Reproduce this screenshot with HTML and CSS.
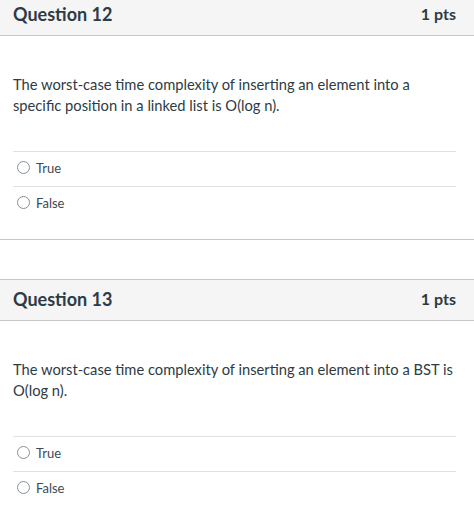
FILE: index.html
```html
<!DOCTYPE html>
<html>
<head>
<meta charset="utf-8">
<link rel="stylesheet" href="styles.css">
</head>
<body>
<div class="quiz">
  <section class="question">
    <header class="q-head">
      <h2 class="q-name">Question 12</h2>
      <span class="q-pts">1 pts</span>
    </header>
    <div class="q-body">
      <p class="q-text">The worst-case time complexity of inserting an element into a specific position in a linked list is O(log n).</p>
      <ul class="answers">
        <li class="answer"><span class="radio"></span><span>True</span></li>
        <li class="answer"><span class="radio"></span><span>False</span></li>
      </ul>
    </div>
  </section>
  <section class="question">
    <header class="q-head">
      <h2 class="q-name">Question 13</h2>
      <span class="q-pts">1 pts</span>
    </header>
    <div class="q-body">
      <p class="q-text">The worst-case time complexity of inserting an element into a BST is O(log n).</p>
      <ul class="answers">
        <li class="answer"><span class="radio"></span><span>True</span></li>
        <li class="answer"><span class="radio"></span><span>False</span></li>
      </ul>
    </div>
  </section>
</div>
</body>
</html>
```
FILE: styles.css
```css
html, body {
  margin: 0;
  padding: 0;
  background: #ffffff;
}
body {
  font-family: Lato, "Open Sans", sans-serif;
  color: #2d3b45;
  overflow: hidden;
}
.quiz {
  margin-top: -6px;
  display: flex;
  flex-direction: column;
  gap: 39px;
}
.question {
  border-bottom: 1px solid #c4c8cb;
}
.q-head {
  height: 37px;
  box-sizing: content-box;
  background: #f5f5f5;
  border-top: 1px solid #c4c8cb;
  border-bottom: 1px solid #c4c8cb;
  display: flex;
  align-items: center;
  justify-content: space-between;
  padding: 0 18px 3px 13px;
}
.q-name {
  margin: 0;
  font-size: 18px;
  font-weight: 700;
  color: #2d3b45;
}
.q-pts {
  font-size: 16px;
  font-weight: 700;
  color: #2d3b45;
}
.q-body {
  padding: 38px 18px 18px 13px;
}
.q-text {
  margin: 0 0 35px 0;
  font-size: 14.7px;
  line-height: 21px;
}
.answers {
  list-style: none;
  margin: 0;
  padding: 0;
  border-top: 1px solid #dfe1e2;
}
.answer {
  height: 31px;
  padding-bottom: 3px;
  display: flex;
  align-items: center;
  gap: 6px;
  padding-left: 4px;
  font-size: 13px;
  color: #3b4a54;
}
.answer + .answer {
  border-top: 1px solid #dfe1e2;
}
.radio {
  width: 11px;
  height: 11px;
  border: 1px solid #8a9096;
  border-radius: 50%;
  background: #fff;
}
```
